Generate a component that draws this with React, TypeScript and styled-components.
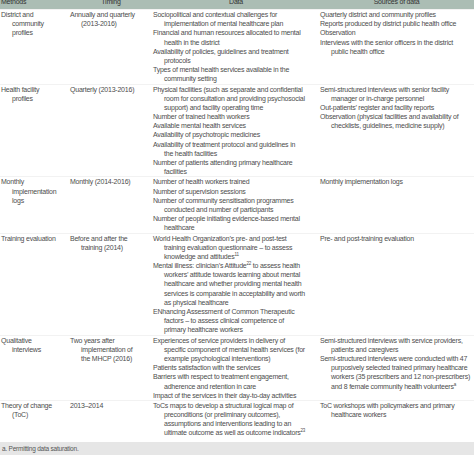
import React from 'react'
import styled, { createGlobalStyle } from 'styled-components'

const GlobalStyle = createGlobalStyle`
  *, *::before, *::after {
    box-sizing: border-box;
  }
  html, body {
    margin: 0;
    padding: 0;
    background: #ffffff;
  }
  body {
    font-family: "Liberation Sans", Arial, sans-serif;
    width: 474px;
    height: 455px;
    overflow: hidden;
  }
`

// a '^' pair marks superscript text, e.g. 'Attitude^22^ to assess'
type Item = string[]

interface RowType {
  method: string[]
  timing: string[]
  data: Item[]
  sources: Item[]
}

const rows: RowType[] = [
  {
    method: ['District and', 'community', 'profiles'],
    timing: ['Annually and quarterly', '(2013-2016)'],
    data: [
      ['Sociopolitical and contextual challenges for', 'implementation of mental healthcare plan'],
      ['Financial and human resources allocated to mental', 'health in the district'],
      ['Availability of policies, guidelines and treatment', 'protocols'],
      ['Types of mental health services available in the', 'community setting'],
    ],
    sources: [
      ['Quarterly district and community profiles'],
      ['Reports produced by district public health office'],
      ['Observation'],
      ['Interviews with the senior officers in the district', 'public health office'],
    ],
  },
  {
    method: ['Health facility', 'profiles'],
    timing: ['Quarterly (2013-2016)'],
    data: [
      [
        'Physical facilities (such as separate and confidential',
        'room for consultation and providing psychosocial',
        'support) and facility operating time',
      ],
      ['Number of trained health workers'],
      ['Available mental health services'],
      ['Availability of psychotropic medicines'],
      ['Availability of treatment protocol and guidelines in', 'the health facilities'],
      ['Number of patients attending primary healthcare', 'facilities'],
    ],
    sources: [
      ['Semi-structured interviews with senior facility', 'manager or in-charge personnel'],
      ['Out-patients\u2019 register and facility reports'],
      ['Observation (physical facilities and availability of', 'checklists, guidelines, medicine supply)'],
    ],
  },
  {
    method: ['Monthly', 'implementation', 'logs'],
    timing: ['Monthly (2014-2016)'],
    data: [
      ['Number of health workers trained'],
      ['Number of supervision sessions'],
      ['Number of community sensitisation programmes', 'conducted and number of participants'],
      ['Number of people initiating evidence-based mental', 'healthcare'],
    ],
    sources: [['Monthly implementation logs']],
  },
  {
    method: ['Training evaluation'],
    timing: ['Before and after the', 'training (2014)'],
    data: [
      [
        'World Health Organization\u2019s pre- and post-test',
        'training evaluation questionnaire \u2013 to assess',
        'knowledge and attitudes^11^',
      ],
      [
        'Mental illness: clinician\u2019s Attitude^22^ to assess health',
        'workers\u2019 attitude towards learning about mental',
        'healthcare and whether providing mental health',
        'services is comparable in acceptability and worth',
        'as physical healthcare',
      ],
      [
        'ENhancing Assessment of Common Therapeutic',
        'factors \u2013 to assess clinical competence of',
        'primary healthcare workers',
      ],
    ],
    sources: [['Pre- and post-training evaluation']],
  },
  {
    method: ['Qualitative', 'interviews'],
    timing: ['Two years after', 'implementation of', 'the MHCP (2016)'],
    data: [
      [
        'Experiences of service providers in delivery of',
        'specific component of mental health services (for',
        'example psychological interventions)',
      ],
      ['Patients satisfaction with the services'],
      ['Barriers with respect to treatment engagement,', 'adherence and retention in care'],
      ['Impact of the services in their day-to-day activities'],
    ],
    sources: [
      ['Semi-structured interviews with service providers,', 'patients and caregivers'],
      [
        'Semi-structured interviews were conducted with 47',
        'purposively selected trained primary healthcare',
        'workers (35 prescribers and 12 non-prescribers)',
        'and 8 female community health volunteers^a^',
      ],
    ],
  },
  {
    method: ['Theory of change', '(ToC)'],
    timing: ['2013\u20132014'],
    data: [
      [
        'ToCs maps to develop a structural logical map of',
        'preconditions (or preliminary outcomes),',
        'assumptions and interventions leading to an',
        'ultimate outcome as well as outcome indicators^23^',
      ],
    ],
    sources: [['ToC workshops with policymakers and primary', 'healthcare workers']],
  },
]

const Page = styled.div`
  width: 474px;
  height: 455px;
  display: flex;
  flex-direction: column;
  color: #4d4d4d;
  font-size: 7px;
  letter-spacing: -0.22px;
  overflow: hidden;
`

const Grid = styled.div`
  display: grid;
  grid-template-columns: 70px 83px 167px 1fr;
`

const HeadCell = styled.div<{ $align?: string }>`
  height: 9px;
  background: #abbdb4;
  color: #333;
  display: flex;
  align-items: flex-end;
  justify-content: ${p => p.$align || 'center'};
  padding: 0 2px 4px 1px;
  line-height: 7px;
  overflow: hidden;
  white-space: nowrap;
`

const Cell = styled.div<{ $first?: boolean }>`
  padding: 0 2px 0 ${p => (p.$first ? '1px' : '0')};
  white-space: nowrap;
  border-top: 1px solid #f2f2f2;
`

const Line = styled.div<{ $cont?: boolean }>`
  padding-left: ${p => (p.$cont ? '11px' : '0')};
  height: 9.2px;
  line-height: 9.2px;
`

const Sup = styled.sup`
  font-size: 4.5px;
  vertical-align: 3px;
  line-height: 0;
`

const Footer = styled.div`
  margin-top: auto;
  height: 13px;
  flex-shrink: 0;
  background: #e6e6e6;
  color: #555;
  padding: 0 2px;
  display: flex;
  align-items: center;
  font-size: 6.5px;
`

function Text({ value }: { value: string }) {
  const parts = value.split('^')
  return (
    <>
      {parts.map((p, i) => (i % 2 === 1 ? <Sup key={i}>{p}</Sup> : <React.Fragment key={i}>{p}</React.Fragment>))}
    </>
  )
}

function Lines({ lines }: { lines: string[] }) {
  return (
    <>
      {lines.map((l, i) => (
        <Line key={i} $cont={i > 0}>
          <Text value={l} />
        </Line>
      ))}
    </>
  )
}

export default function App() {
  return (
    <Page>
      <GlobalStyle />
      <Grid>
        <HeadCell $align="flex-start">Methods</HeadCell>
        <HeadCell>Timing</HeadCell>
        <HeadCell>Data</HeadCell>
        <HeadCell>Sources of data</HeadCell>
        {rows.map((r, i) => (
          <React.Fragment key={i}>
            <Cell $first>
              <Lines lines={r.method} />
            </Cell>
            <Cell>
              <Lines lines={r.timing} />
            </Cell>
            <Cell>
              {r.data.map((it, j) => (
                <Lines key={j} lines={it} />
              ))}
            </Cell>
            <Cell>
              {r.sources.map((it, j) => (
                <Lines key={j} lines={it} />
              ))}
            </Cell>
          </React.Fragment>
        ))}
      </Grid>
      <Footer>a. Permitting data saturation.</Footer>
    </Page>
  )
}
